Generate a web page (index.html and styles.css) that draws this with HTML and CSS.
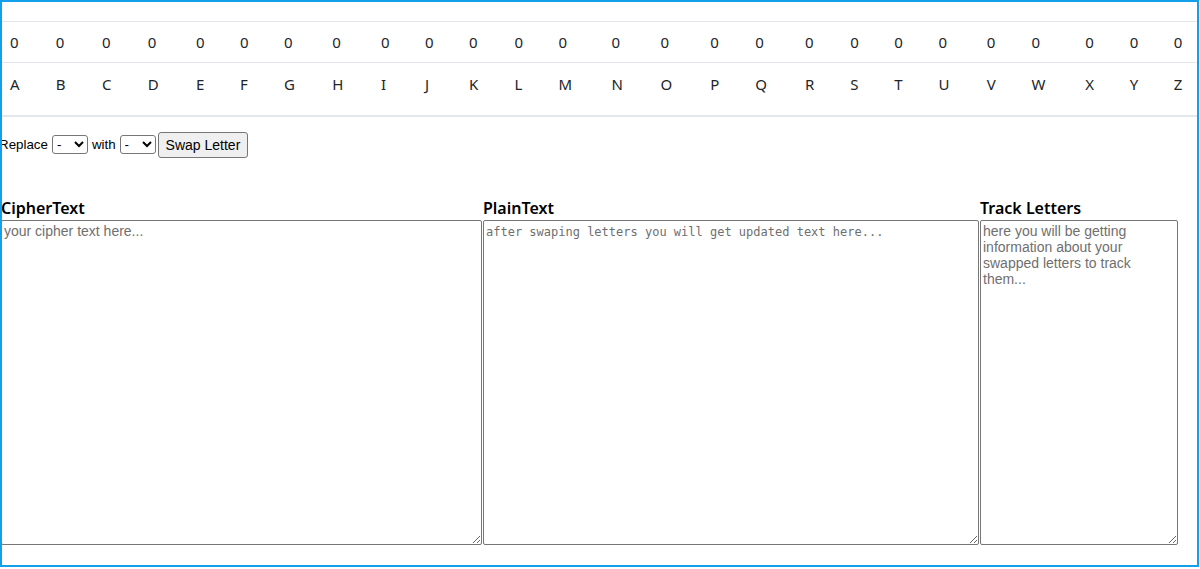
FILE: index.html
```html
<!DOCTYPE html>
<html>
<head>
<meta charset="utf-8">
<title>Substitution Cipher</title>
<link rel="stylesheet" href="styles.css">
</head>
<body>
<div class="page">
  <div class="freq-wrap">
    <table class="freq">
      <tr class="counts">
        <td>0</td><td>0</td><td>0</td><td>0</td><td>0</td><td>0</td><td>0</td><td>0</td><td>0</td><td>0</td><td>0</td><td>0</td><td>0</td><td>0</td><td>0</td><td>0</td><td>0</td><td>0</td><td>0</td><td>0</td><td>0</td><td>0</td><td>0</td><td>0</td><td>0</td><td>0</td>
      </tr>
      <tr class="letters">
        <td>A</td><td>B</td><td>C</td><td>D</td><td>E</td><td>F</td><td>G</td><td>H</td><td>I</td><td>J</td><td>K</td><td>L</td><td>M</td><td>N</td><td>O</td><td>P</td><td>Q</td><td>R</td><td>S</td><td>T</td><td>U</td><td>V</td><td>W</td><td>X</td><td>Y</td><td>Z</td>
      </tr>
    </table>
  </div>

  <div class="controls">
    <span>Replace</span>
    <select class="pick"><option>-</option></select>
    <span>with</span>
    <select class="pick"><option>-</option></select>
    <button class="swap" type="button">Swap Letter</button>
  </div>

  <div class="panes">
    <div class="pane pane-cipher">
      <div class="label">CipherText</div>
      <textarea class="box box-sans" placeholder="your cipher text here..."></textarea>
    </div>
    <div class="pane pane-plain">
      <div class="label">PlainText</div>
      <textarea class="box box-mono" placeholder="after swaping letters you will get updated text here..."></textarea>
    </div>
    <div class="pane pane-track">
      <div class="label">Track Letters</div>
      <textarea class="box box-sans" placeholder="here you will be getting information about your swapped letters to track them..."></textarea>
    </div>
  </div>
</div>
<div class="frame"></div>
</body>
</html>
```

FILE: styles.css
```css
html, body {
  margin: 0;
  padding: 0;
  background: #ffffff;
  overflow: hidden;
}

body {
  font-family: "Noto Sans", "Open Sans", sans-serif;
  color: #212529;
}

.page {
  padding-top: 21px;
}

.freq-wrap {
  width: 1198px;
  overflow: hidden;
}

.freq {
  width: 1208px;
  margin-left: 2px;
  border-collapse: collapse;
  font-size: 15px;
  line-height: 24px;
}

.freq td {
  text-align: left;
  padding: 0 8px;
  border-top: 1px solid #e3e6ea;
}

.counts td {
  height: 40px;
  vertical-align: middle;
}

.letters td {
  height: 53px;
  vertical-align: top;
  padding-top: 9px;
  box-sizing: border-box;
  border-bottom: 2px solid #e3e6ea;
}

.controls {
  margin-top: 15px;
  display: flex;
  align-items: center;
  gap: 4px;
  font-family: "Liberation Sans", Arial, sans-serif;
  font-size: 13.33px;
  color: #000;
  margin-left: -1px;
  height: 26px;
}

.pick {
  width: 36px;
  height: 19px;
  font-family: "Liberation Sans", Arial, sans-serif;
  font-size: 13.33px;
  border: 1px solid #767676;
  border-radius: 3px;
  background: #fff;
  color: #000;
  padding: 0;
}

.swap {
  height: 26px;
  padding: 0 7px;
  margin-left: -2px;
  font-family: "Liberation Sans", Arial, sans-serif;
  font-size: 14px;
  color: #000;
  background: #efefef;
  border: 1px solid #767676;
  border-radius: 3px;
}

.panes {
  margin-top: 38px;
  display: flex;
  gap: 1px;
  padding-left: 1px;
}

.pane {
  display: flex;
  flex-direction: column;
}

.pane-cipher { width: 481px; }
.pane-plain { width: 496px; }
.pane-track { width: 198px; }

.label {
  font-family: "Noto Sans", "Open Sans", sans-serif;
  font-weight: 600;
  font-size: 16px;
  line-height: 24px;
  color: #000;
}

.box {
  width: 100%;
  height: 325px;
  box-sizing: border-box;
  margin: 0;
  padding: 2px;
  border: 1px solid #767676;
  border-radius: 2px;
  background: #fff;
  color: #000;
  resize: both;
}

.box-sans {
  font-family: "Liberation Sans", Arial, sans-serif;
  font-size: 14px;
  line-height: 16px;
}

.box-mono {
  font-family: "DejaVu Sans Mono", monospace;
  font-size: 12px;
  line-height: 16px;
  padding-top: 3px;
}

.box::placeholder {
  color: #6f6f6f;
}

.frame {
  position: fixed;
  left: 0;
  top: 0;
  width: 1199px;
  height: 567px;
  box-sizing: border-box;
  border: 2px solid #12a0ea;
  pointer-events: none;
}
```
